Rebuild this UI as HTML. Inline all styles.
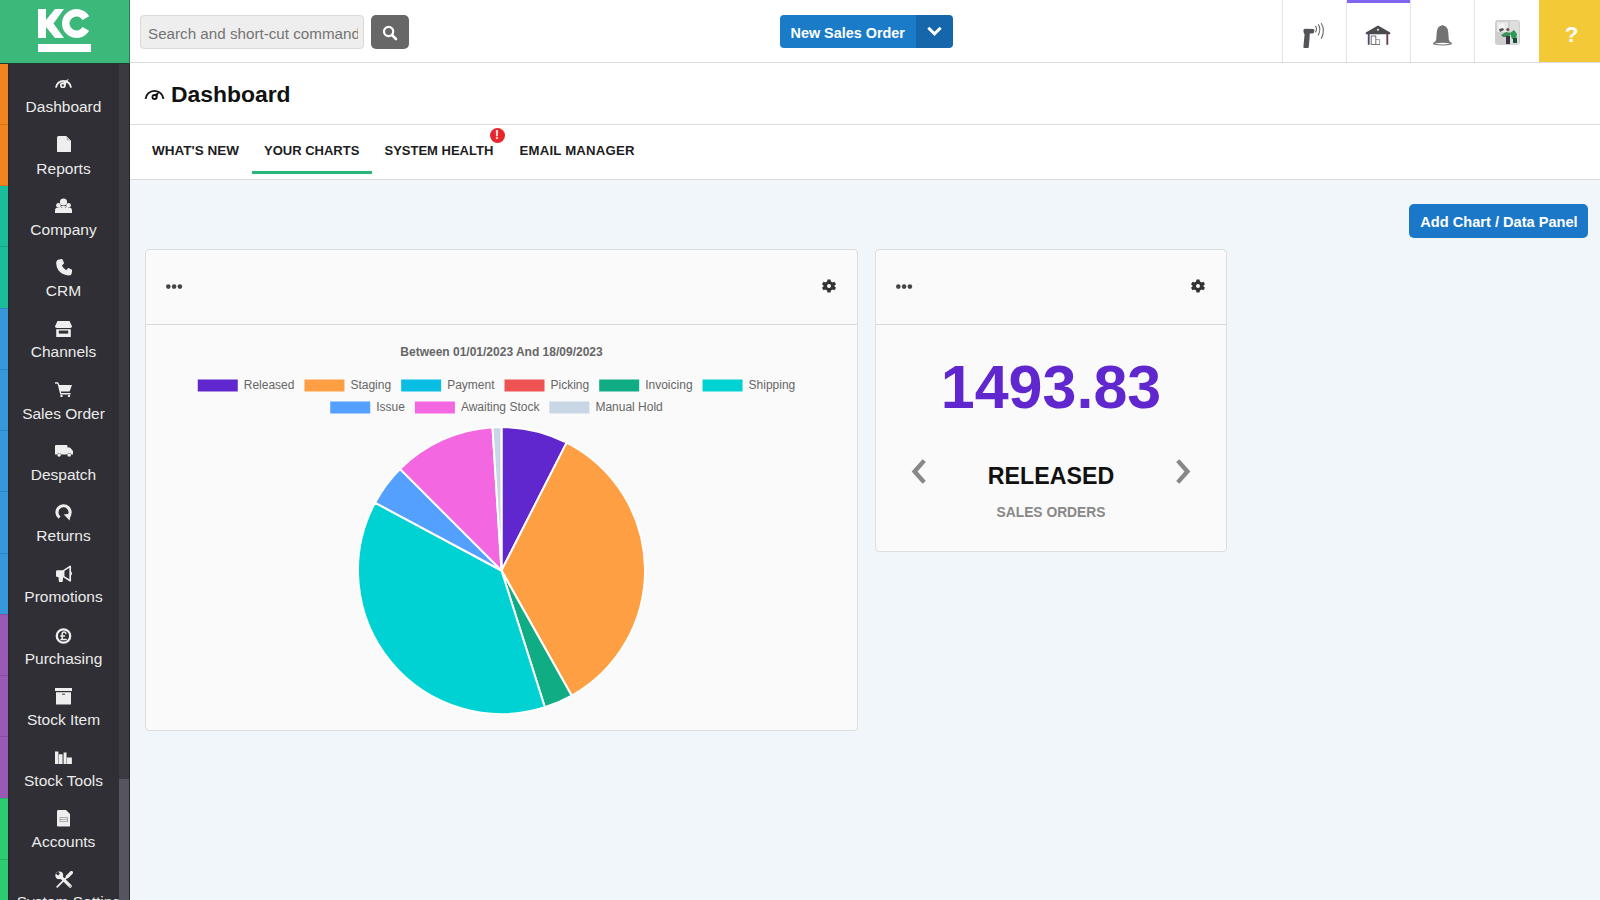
<!DOCTYPE html>
<html><head><meta charset="utf-8">
<style>
*{box-sizing:border-box;margin:0;padding:0}
html,body{width:1600px;height:900px;overflow:hidden;background:#f1f6fa;font-family:"Liberation Sans",sans-serif}
.abs{position:absolute}
#logo{left:0;top:0;width:130px;height:63px;background:#3db87b}
#side{left:0;top:63px;width:130px;height:837px;background:#2f2f35}
#strip{left:0;top:63px;width:8px;height:837px}
.it{position:absolute;left:8px;width:111px;height:61.25px}
.it .lbl{position:absolute;left:-10px;right:-10px;top:36.3px;text-align:center;color:#ebebeb;font-size:15.5px;line-height:16px;white-space:nowrap}
.it svg{position:absolute;left:45.5px;top:9px;width:20px;height:20px}
#track{left:119px;top:63px;width:10px;height:837px;background:#3a3a42}
#thumb{left:119px;top:779px;width:10px;height:121px;background:#55555f}
#sline{left:129px;top:63px;width:1px;height:837px;background:#25252a}
#top{left:130px;top:0;width:1470px;height:63px;background:#fff;border-bottom:1px solid #dcdcdc}
#title{left:130px;top:63px;width:1470px;height:62px;background:#fff;border-bottom:1px solid #dcdcdc}
#tabs{left:130px;top:125px;width:1470px;height:55px;background:#fff;border-bottom:1px solid #dcdcdc}
.tab{position:absolute;top:17px;font-size:13.5px;font-weight:bold;color:#1c1c22;letter-spacing:0.55px;white-space:nowrap;line-height:16px}
.card{position:absolute;background:#fafafa;border:1px solid #dcdfe2;border-radius:4px}
.card .hd{position:absolute;left:0;right:0;top:0;height:75px;border-bottom:1px solid #d8dadc}
.btn{position:absolute;background:#1b78c8;border-radius:5px;color:#fff;font-weight:bold;white-space:nowrap}
</style></head><body>
<!-- logo -->
<div id="logo" class="abs">
  <svg class="abs" style="left:0;top:0" width="130" height="63" viewBox="0 0 130 63">
    <path d="M38 9H46V20L55 9H64L53.5 23.5L64 38H55L46 27V38H38Z" fill="#fff"/>
    <path d="M89.06 16.25A14.5 14.5 0 1 0 89.06 30.75L82.56 27A7 7 0 1 1 82.56 20Z" fill="#fff"/>
    <rect x="38" y="44" width="53" height="8" fill="#fff"/>
  </svg>
</div>
<div id="side" class="abs"></div>
<div id="strip" class="abs">
  <div class="abs" style="left:0;top:0;width:8px;height:122.5px;background:#f0851f"></div>
  <div class="abs" style="left:0;top:122.5px;width:8px;height:122.5px;background:#1abc9c"></div>
  <div class="abs" style="left:0;top:245px;width:8px;height:306.25px;background:#3498db"></div>
  <div class="abs" style="left:0;top:551.25px;width:8px;height:183.75px;background:#9b59b6"></div>
  <div class="abs" style="left:0;top:735px;width:8px;height:102px;background:#2ecc71"></div>
</div>
<div id="track" class="abs"></div>
<div id="thumb" class="abs"></div>
<div id="sline" class="abs"></div>
<div class="abs" style="left:0;top:123.75px;width:8px;height:1px;background:rgba(0,0,0,0.13)"></div><div class="abs" style="left:0;top:185.00px;width:8px;height:1px;background:rgba(0,0,0,0.13)"></div><div class="abs" style="left:0;top:246.25px;width:8px;height:1px;background:rgba(0,0,0,0.13)"></div><div class="abs" style="left:0;top:307.50px;width:8px;height:1px;background:rgba(0,0,0,0.13)"></div><div class="abs" style="left:0;top:368.75px;width:8px;height:1px;background:rgba(0,0,0,0.13)"></div><div class="abs" style="left:0;top:430.00px;width:8px;height:1px;background:rgba(0,0,0,0.13)"></div><div class="abs" style="left:0;top:491.25px;width:8px;height:1px;background:rgba(0,0,0,0.13)"></div><div class="abs" style="left:0;top:552.50px;width:8px;height:1px;background:rgba(0,0,0,0.13)"></div><div class="abs" style="left:0;top:613.75px;width:8px;height:1px;background:rgba(0,0,0,0.13)"></div><div class="abs" style="left:0;top:675.00px;width:8px;height:1px;background:rgba(0,0,0,0.13)"></div><div class="abs" style="left:0;top:736.25px;width:8px;height:1px;background:rgba(0,0,0,0.13)"></div><div class="abs" style="left:0;top:797.50px;width:8px;height:1px;background:rgba(0,0,0,0.13)"></div><div class="abs" style="left:0;top:858.75px;width:8px;height:1px;background:rgba(0,0,0,0.13)"></div>
<div class="abs" style="left:8px;top:63px;width:1px;height:837px;background:#27272c"></div>
<div class="abs" style="left:0;top:63px;width:130px;height:1px;background:#1f3a2e"></div>
<div class="abs" style="left:129px;top:0;width:1px;height:63px;background:#2d7a55"></div>
<!-- SIDEBAR ITEMS -->
<div class="it" style="top:63.00px"><svg style="left:47px;top:14px;width:17px;height:11px" viewBox="0 0 17 11"><path d="M0.95 10.6A7.6 7.6 0 0 1 16.05 10.6" fill="none" stroke="#eee" stroke-width="1.9"/><circle cx="7.9" cy="8.3" r="2.1" fill="none" stroke="#eee" stroke-width="1.7"/><path d="M6.4 6.9L13.8 1.6L9.5 9.8Z" fill="#eee"/><circle cx="7.9" cy="8.3" r="1" fill="#2f2f35"/></svg><div class="lbl">Dashboard</div></div>
<div class="it" style="top:124.25px"><svg style="left:48.50px;top:11.5px;width:14px;height:16.6px" viewBox="0 0 14 16.6"><path d="M0 1.6Q0 0 1.6 0H9.2L14 4.8V15Q14 16.6 12.4 16.6H1.6Q0 16.6 0 15Z" fill="#eee"/><path d="M9.6 0.4V4.4H13.6" fill="#bbb"/></svg><div class="lbl">Reports</div></div>
<div class="it" style="top:185.50px"><svg style="left:47.00px;top:12.5px;width:17px;height:15px" viewBox="0 0 17 15"><circle cx="8.5" cy="4" r="3.6" fill="#eee"/><circle cx="3.4" cy="7.2" r="2.3" fill="#eee"/><circle cx="13.6" cy="7.2" r="2.3" fill="#eee"/><path d="M0 15V12.6Q0 9.6 3 9.6H14Q17 9.6 17 12.6V15Z" fill="#eee"/><path d="M3.6 15V11.6Q3.6 8 7 8H10Q13.4 8 13.4 11.6V15Z" fill="#eee"/><path d="M5.6 8.4L7 9.8M11.4 8.4L10 9.8" stroke="#555" stroke-width="0.8"/></svg><div class="lbl">Company</div></div>
<div class="it" style="top:246.75px"><svg style="left:47.50px;top:12.25px;width:16px;height:16.5px" viewBox="0 0 16 16.5"><path d="M3.2 0.4L5.6 0Q6.4 0 6.7 0.8L7.9 3.8Q8.2 4.6 7.5 5.1L5.9 6.4Q7.6 9.8 10.3 11.2L11.6 9.6Q12.2 8.9 13 9.2L15.6 10.4Q16.3 10.8 16.2 11.6L15.8 14Q15.5 16.5 13 16.5Q6.5 16.2 2.5 11.5Q0 8 0.2 3.6Q0.4 0.8 3.2 0.4Z" fill="#eee"/></svg><div class="lbl">CRM</div></div>
<div class="it" style="top:308.00px"><svg style="left:47.00px;top:12.8px;width:17px;height:16px" viewBox="0 0 17 16"><path d="M2.5 0H14.5L17 5.2Q17 7 15.2 7H1.8Q0 7 0 5.2Z" fill="#eee"/><path d="M1.2 8.2H15.8V16H1.2Z" fill="#eee"/><path d="M3.8 9.6H13.2V12.6H3.8Z" fill="#2f2f35"/></svg><div class="lbl">Channels</div></div>
<div class="it" style="top:369.25px"><svg style="left:47.00px;top:12.75px;width:17px;height:15px" viewBox="0 0 17 15"><path d="M0 0.3H3.2L4.4 3H17L14.6 9.6H5.8L6.3 11H15.6V12.4H5.2L2.6 1.8H0Z" fill="#eee"/><circle cx="6.5" cy="14" r="1.2" fill="#eee"/><circle cx="14" cy="14" r="1.2" fill="#eee"/></svg><div class="lbl">Sales Order</div></div>
<div class="it" style="top:430.50px"><svg style="left:46.50px;top:14.5px;width:18px;height:12px" viewBox="0 0 18 12"><path d="M0 1Q0 0 1 0H11.5Q12.5 0 12.5 1V2.5H15L18 6V9.5H16.3A2.2 2.2 0 0 0 12.2 9.5H6.2A2.2 2.2 0 0 0 2 9.5H0Z" fill="#eee"/><circle cx="4.1" cy="10" r="1.8" fill="#eee"/><circle cx="14.2" cy="10" r="1.8" fill="#eee"/></svg><div class="lbl">Despatch</div></div>
<div class="it" style="top:491.75px"><svg style="left:47px;top:11.5px;width:17px;height:17.5px" viewBox="0 0 17 17.5"><path d="M4.6 14.6A6.6 6.6 0 1 1 13 14.2" fill="none" stroke="#eee" stroke-width="3.1"/><path d="M8.8 11.6L15.8 10.6L14.6 17.4Z" fill="#eee"/></svg><div class="lbl">Returns</div></div>
<div class="it" style="top:553.00px"><svg style="left:47.00px;top:11.5px;width:17px;height:17px" viewBox="0 0 17 17"><path d="M1 6.5Q1 5.2 2.3 5.2H8.6V12H2.3Q1 12 1 10.7Z" fill="#eee"/><path d="M3.4 12H8.2L7.6 17H4Z" fill="#eee"/><path d="M8.6 5.6L15.2 1.4V15.8L8.6 11.6Z" fill="none" stroke="#eee" stroke-width="1.7" stroke-linejoin="round"/><path d="M15.6 6.6Q17 6.8 17 8.6Q17 10.4 15.6 10.6Z" fill="#eee"/></svg><div class="lbl">Promotions</div></div>
<div class="it" style="top:614.25px"><svg style="left:47.00px;top:13.5px;width:17px;height:16px" viewBox="0 0 17 16"><circle cx="8.5" cy="8" r="6.7" fill="none" stroke="#eee" stroke-width="2.3"/><path d="M10.9 5.4Q10.6 4 9.1 4Q7.2 4 7.2 6V10.2Q7.2 11.2 6 11.6H11.2M5.8 8H9.6" fill="none" stroke="#eee" stroke-width="1.5" stroke-linecap="round" stroke-linejoin="round"/></svg><div class="lbl">Purchasing</div></div>
<div class="it" style="top:675.50px"><svg style="left:47.00px;top:12.8px;width:17px;height:16.5px" viewBox="0 0 17 16.5"><path d="M0 0H17V3H0Z" fill="#eee"/><path d="M1 4.2H16V16.5H1Z" fill="#eee"/><path d="M7 5.5H10V7H7Z" fill="#777"/></svg><div class="lbl">Stock Item</div></div>
<div class="it" style="top:736.75px"><svg style="left:47.00px;top:14.5px;width:17px;height:13px" viewBox="0 0 17 13"><path d="M0 0.4H3.4V13H0Z M3.9 3.2H7.5V13H3.9Z M8.6 1.6H11.5V13H8.6Z M11.9 6.4H16.9V13H11.9Z" fill="#eee"/><path d="M3.4 4V13M7.9 4V13M11.7 6V13" stroke="#aaa" stroke-width="0.6"/></svg><div class="lbl">Stock Tools</div></div>
<div class="it" style="top:798.00px"><svg style="left:48.75px;top:12px;width:13.5px;height:16.6px" viewBox="0 0 13.5 16.6"><path d="M0 1.4Q0 0 1.4 0H9L13.5 4.5V15.2Q13.5 16.6 12.1 16.6H1.4Q0 16.6 0 15.2Z" fill="#eee"/><path d="M2.6 7.2H10.9V12H2.6Z" fill="#999"/><path d="M3.4 8H10.1V9.2H3.4Z M3.4 10H10.1V11.2H3.4Z" fill="#eee"/></svg><div class="lbl">Accounts</div></div>
<div class="it" style="top:859.25px"><svg style="left:46.50px;top:11.75px;width:18px;height:17px" viewBox="0 0 18 17"><path d="M5.6 5.6L15.2 15.2" stroke="#eee" stroke-width="3.2" stroke-linecap="round"/><circle cx="4.3" cy="4.3" r="3.9" fill="#eee"/><path d="M0.8 2.4L2.8 0.4L5 2.6L3 4.6Z" fill="#2f2f35"/><circle cx="15.2" cy="15.2" r="0.7" fill="#777"/><path d="M16.4 1.6L12.4 5.6" stroke="#eee" stroke-width="3.4" stroke-linecap="round"/><path d="M12.2 5.8L2.2 15.8" stroke="#eee" stroke-width="1.7" stroke-linecap="round"/></svg><div class="lbl" style="left:8.7px;right:0;top:34.4px;text-align:left;overflow:hidden">System Settings</div></div>
<!-- TOPBAR -->
<div id="top" class="abs"></div>
<div class="abs" style="left:140px;top:15px;width:224px;height:34px;background:#eee;border:1px solid #d9d9d9;border-radius:4px;overflow:hidden">
  <div class="abs" style="left:7px;top:8.5px;width:210px;height:20px;overflow:hidden;font-size:15.2px;line-height:17px;color:#747474;white-space:nowrap">Search and short-cut commands</div>
</div>
<div class="abs" style="left:371px;top:15px;width:38px;height:34px;background:#676767;border-radius:5px">
  <svg class="abs" style="left:0;top:0" width="38" height="34" viewBox="0 0 38 34"><circle cx="17.6" cy="16.5" r="4.6" fill="none" stroke="#fff" stroke-width="2.2"/><path d="M21 20L25 24" stroke="#fff" stroke-width="2.6" stroke-linecap="round"/></svg>
</div>
<div class="abs" style="left:780px;top:15px;width:136px;height:33px;background:#1a7bc9;border-radius:4px 0 0 4px"></div>
<div class="abs" style="left:916px;top:15px;width:37px;height:33px;background:#1666ab;border-radius:0 4px 4px 0"></div>
<div class="abs" style="left:790.5px;top:24.5px;font-size:14.4px;line-height:17px;font-weight:bold;color:#fff;white-space:nowrap">New Sales Order</div>
<svg class="abs" style="left:916px;top:15px" width="37" height="33" viewBox="0 0 37 33"><path d="M13.4 13.8L18.5 18.8L23.6 13.8" fill="none" stroke="#fff" stroke-width="3" stroke-linecap="square"/></svg>
<div class="abs" style="left:1282px;top:0;width:1px;height:62px;background:#e3e3e3"></div>
<div class="abs" style="left:1346px;top:0;width:1px;height:62px;background:#e3e3e3"></div>
<div class="abs" style="left:1410px;top:0;width:1px;height:62px;background:#e3e3e3"></div>
<div class="abs" style="left:1474px;top:0;width:1px;height:62px;background:#e3e3e3"></div>
<div class="abs" style="left:1347px;top:0;width:63px;height:3px;background:#8165f0"></div>
<div class="abs" style="left:1539px;top:0;width:61px;height:62px;background:#f3c937"></div>
<div class="abs" style="left:1541px;top:23px;width:61px;text-align:center;font-size:22.5px;line-height:24px;font-weight:bold;color:#fff">?</div>
<!-- scanner -->
<svg class="abs" style="left:1300px;top:20px" width="28" height="30" viewBox="0 0 28 30">
  <path d="M3.4 10.6Q3.2 8.8 5.2 8.8L13.4 8.9Q14.8 9 14.4 10.6L13.9 12.4Q13.6 13.4 12.4 13.4L9.8 13.6L9.6 17.6L8.8 27.2Q8.6 28 7.8 28H4.4Q3.2 28 3.4 26.8L4.6 14.2Q3.6 13.4 3.4 10.6Z" fill="#525459"/>
  <path d="M15.4 5.8Q17.6 8.8 15.4 12.4" fill="none" stroke="#6a6a6a" stroke-width="1.1"/>
  <path d="M18.2 4.4Q21.4 9 18.2 15.6" fill="none" stroke="#6a6a6a" stroke-width="1.1"/>
  <path d="M21.2 3.2Q25.6 9.8 21.2 18.8" fill="none" stroke="#6a6a6a" stroke-width="1.1"/>
</svg>
<!-- warehouse -->
<svg class="abs" style="left:1365px;top:24px" width="26" height="23" viewBox="0 0 26 23">
  <path d="M0.8 8.6L13 1.6L25.2 8.6V10.2H0.8Z" fill="#4a4a4f"/>
  <rect x="12" y="4.8" width="2" height="1.8" fill="#ddd"/>
  <rect x="2.8" y="9.6" width="1.8" height="11.2" fill="#4b4672"/>
  <rect x="21.4" y="9.6" width="1.8" height="11.2" fill="#6b3650"/>
  <rect x="6.2" y="12" width="4.6" height="8.4" fill="none" stroke="#666" stroke-width="0.9"/>
  <path d="M10.8 15.6H14.6V20.4H10.8" fill="none" stroke="#888" stroke-width="0.8"/>
  <path d="M6 20.5H15" stroke="#777" stroke-width="0.9"/>
</svg>
<!-- bell -->
<svg class="abs" style="left:1431px;top:24px" width="23" height="23" viewBox="0 0 23 23">
  <path d="M10.5 1.6Q11.5 0.4 12.5 1.6Q16.6 2.6 17.2 7.8L17.8 15.4Q18 17.6 20.6 18.8Q21.4 19.6 20.4 20.4Q11.5 22.6 2.6 20.4Q1.6 19.6 2.4 18.8Q5 17.6 5.2 15.4L5.8 7.8Q6.4 2.6 10.5 1.6Z" fill="#737373"/>
  <path d="M3.4 19.4Q11.5 21.4 19.6 19.4Q11.5 18 3.4 19.4Z" fill="#fff"/>
</svg>
<!-- avatar -->
<svg class="abs" style="left:1495px;top:20px" width="25" height="25" viewBox="0 0 25 25">
  <rect x="0" y="0" width="25" height="25" rx="3" fill="#cfcfcf"/>
  <rect x="15" y="1" width="9" height="23" fill="#dedede"/>
  <rect x="2" y="2" width="11" height="10" fill="#e9e9e9"/>
  <path d="M3 6L8 3L10 8L5 11Z" fill="#f7f7f7"/>
  <path d="M4 9L8 8L9 10L5 12Z" fill="#555"/>
  <circle cx="12.8" cy="9.6" r="1.6" fill="#6a5858"/>
  <path d="M6 15L11 12L16 13L14 17L8 17Z" fill="#3c8f58"/>
  <path d="M15 13L19 10L22 14L21 20L17 19Z" fill="#2f9a58"/>
  <path d="M11 16H15V24H11Z" fill="#3d3346"/>
  <path d="M18 18H22V23H18Z" fill="#1d4d34"/>
</svg>

<div id="title" class="abs"></div>
<svg class="abs" style="left:144px;top:86px" width="22" height="15" viewBox="0 0 22 15">
  <path d="M1.55 12.9A9 9 0 0 1 19.45 12.9" fill="none" stroke="#111" stroke-width="1.9"/>
  <circle cx="10.6" cy="11" r="2.1" fill="none" stroke="#111" stroke-width="1.9"/>
  <path d="M9 9.4L15.6 5.2L12.4 12.2Z" fill="#111"/><circle cx="10.6" cy="11" r="1" fill="#fff"/>
</svg>
<div class="abs" style="left:171px;top:81px;font-size:22.9px;line-height:26px;font-weight:bold;color:#111;white-space:nowrap">Dashboard</div>

<div id="tabs" class="abs"></div>
<div class="tab" style="left:152px;top:143px;font-size:13.5px;letter-spacing:0px">WHAT'S NEW</div>
<div class="tab" style="left:264px;top:143px;font-size:13px;letter-spacing:0px">YOUR CHARTS</div>
<div class="tab" style="left:384.5px;top:143px;font-size:13px;letter-spacing:0px">SYSTEM HEALTH</div>
<div class="tab" style="left:519.5px;top:143px;font-size:13.2px;letter-spacing:0.2px">EMAIL MANAGER</div>
<div class="abs" style="left:252px;top:171px;width:120px;height:3px;background:#2ab67b"></div>
<div class="abs" style="left:489.5px;top:127.5px;width:15px;height:15px;border-radius:50%;background:#e6262c"></div>
<div class="abs" style="left:489.5px;top:127px;width:15px;text-align:center;font-size:12px;line-height:16px;font-weight:bold;color:#fff">!</div>

<!-- CONTENT -->
<div class="btn" style="left:1409px;top:204px;width:179px;height:34px"></div>
<div class="abs" style="left:1409.5px;top:214px;width:179px;text-align:center;font-size:14.6px;line-height:17px;font-weight:bold;color:#fff;white-space:nowrap">Add Chart / Data Panel</div>
<!-- card 1 -->
<div class="card" style="left:145px;top:249px;width:713px;height:482px"><div class="hd"></div></div>
<svg class="abs" style="left:164px;top:282px" width="22" height="9" viewBox="0 0 22 9"><circle cx="4.3" cy="4.6" r="2.3" fill="#444"/><circle cx="10.1" cy="4.6" r="2.3" fill="#444"/><circle cx="15.9" cy="4.6" r="2.3" fill="#444"/></svg>
<svg class="abs" style="left:821px;top:278px" width="16" height="16" viewBox="-8 -8 16 16"><g fill="#333"><path d="M-1.5 -6.6H1.5L1.9 -4.6L3.6 -3.6L5.5 -4.3L7 -1.7L5.5 -0.4V0.4L5.5 0.4L7 1.7L5.5 4.3L3.6 3.6L1.9 4.6L1.5 6.6H-1.5L-1.9 4.6L-3.6 3.6L-5.5 4.3L-7 1.7L-5.5 0.4V-0.4L-7 -1.7L-5.5 -4.3L-3.6 -3.6L-1.9 -4.6Z"/></g><circle r="4.6" fill="#333"/><circle r="2" fill="#fafafa"/></svg>
<svg class="abs" style="left:0;top:0" width="1600" height="900" viewBox="0 0 1600 900">
  <text x="501.5" y="355.5" text-anchor="middle" font-family="Liberation Sans" font-weight="bold" font-size="12" fill="#666">Between 01/01/2023 And 18/09/2023</text>
  <g font-family="Liberation Sans" font-size="12" fill="#666">
    <rect x="197.75" y="379.5" width="40" height="12" fill="#5f27cd"/><text x="243.75" y="388.6">Released</text>
    <rect x="304.45" y="379.5" width="40" height="12" fill="#ff9f43"/><text x="350.45" y="388.6">Staging</text>
    <rect x="401.15" y="379.5" width="40" height="12" fill="#0abde3"/><text x="447.15" y="388.6">Payment</text>
    <rect x="504.5" y="379.5" width="40" height="12" fill="#ee5253"/><text x="550.5" y="388.6">Picking</text>
    <rect x="599.19" y="379.5" width="40" height="12" fill="#10ac84"/><text x="645.19" y="388.6">Invoicing</text>
    <rect x="702.55" y="379.5" width="40" height="12" fill="#00d2d3"/><text x="748.55" y="388.6">Shipping</text>
    <rect x="330.23" y="401.5" width="40" height="12" fill="#54a0ff"/><text x="376.23" y="410.6">Issue</text>
    <rect x="414.91" y="401.5" width="40" height="12" fill="#f368e0"/><text x="460.91" y="410.6">Awaiting Stock</text>
    <rect x="549.4" y="401.5" width="40" height="12" fill="#c8d6e5"/><text x="595.4" y="410.6">Manual Hold</text>
  </g>
  <g stroke="#fff" stroke-width="2" stroke-linejoin="round">
<path d="M501.5 570.5L501.50 427.00A143.5 143.5 0 0 1 566.65 442.64Z" fill="#5f27cd"/>
<path d="M501.5 570.5L566.65 442.64A143.5 143.5 0 0 1 571.73 695.64Z" fill="#ff9f43"/>
<path d="M501.5 570.5L571.73 695.64A143.5 143.5 0 0 1 544.89 707.28Z" fill="#10ac84"/>
<path d="M501.5 570.5L544.89 707.28A143.5 143.5 0 0 1 375.03 502.69Z" fill="#00d2d3"/>
<path d="M501.5 570.5L375.03 502.69A143.5 143.5 0 0 1 400.03 469.03Z" fill="#54a0ff"/>
<path d="M501.5 570.5L400.03 469.03A143.5 143.5 0 0 1 492.49 427.28Z" fill="#f368e0"/>
<path d="M501.5 570.5L492.49 427.28A143.5 143.5 0 0 1 501.50 427.00Z" fill="#c8d6e5"/>
  </g>
</svg>
<!-- card 2 -->
<div class="card" style="left:875px;top:249px;width:352px;height:303px"><div class="hd"></div></div>
<svg class="abs" style="left:894px;top:282px" width="22" height="9" viewBox="0 0 22 9"><circle cx="4.3" cy="4.6" r="2.3" fill="#444"/><circle cx="10.1" cy="4.6" r="2.3" fill="#444"/><circle cx="15.9" cy="4.6" r="2.3" fill="#444"/></svg>
<svg class="abs" style="left:1190px;top:278px" width="16" height="16" viewBox="-8 -8 16 16"><g fill="#333"><path d="M-1.5 -6.6H1.5L1.9 -4.6L3.6 -3.6L5.5 -4.3L7 -1.7L5.5 -0.4V0.4L5.5 0.4L7 1.7L5.5 4.3L3.6 3.6L1.9 4.6L1.5 6.6H-1.5L-1.9 4.6L-3.6 3.6L-5.5 4.3L-7 1.7L-5.5 0.4V-0.4L-7 -1.7L-5.5 -4.3L-3.6 -3.6L-1.9 -4.6Z"/></g><circle r="4.6" fill="#333"/><circle r="2" fill="#fafafa"/></svg>
<div class="abs" style="left:875px;top:355px;width:352px;text-align:center;font-size:61px;line-height:64px;font-weight:bold;color:#5f27cd;white-space:nowrap">1493.83</div>
<div class="abs" style="left:875px;top:461.5px;width:352px;text-align:center;font-size:23.2px;line-height:28px;font-weight:bold;color:#111;white-space:nowrap">RELEASED</div>
<div class="abs" style="left:875px;top:503.5px;width:352px;text-align:center;font-size:13.8px;line-height:17px;font-weight:bold;color:#888;white-space:nowrap">SALES ORDERS</div>
<svg class="abs" style="left:905px;top:455px" width="28" height="34" viewBox="0 0 28 34"><path d="M19.2 5.6L9.6 16.5L19.2 27.4" fill="none" stroke="#888" stroke-width="4.4"/></svg>
<svg class="abs" style="left:1169px;top:455px" width="28" height="34" viewBox="0 0 28 34"><path d="M8.8 5.6L18.4 16.5L8.8 27.4" fill="none" stroke="#888" stroke-width="4.4"/></svg>

</body></html>
